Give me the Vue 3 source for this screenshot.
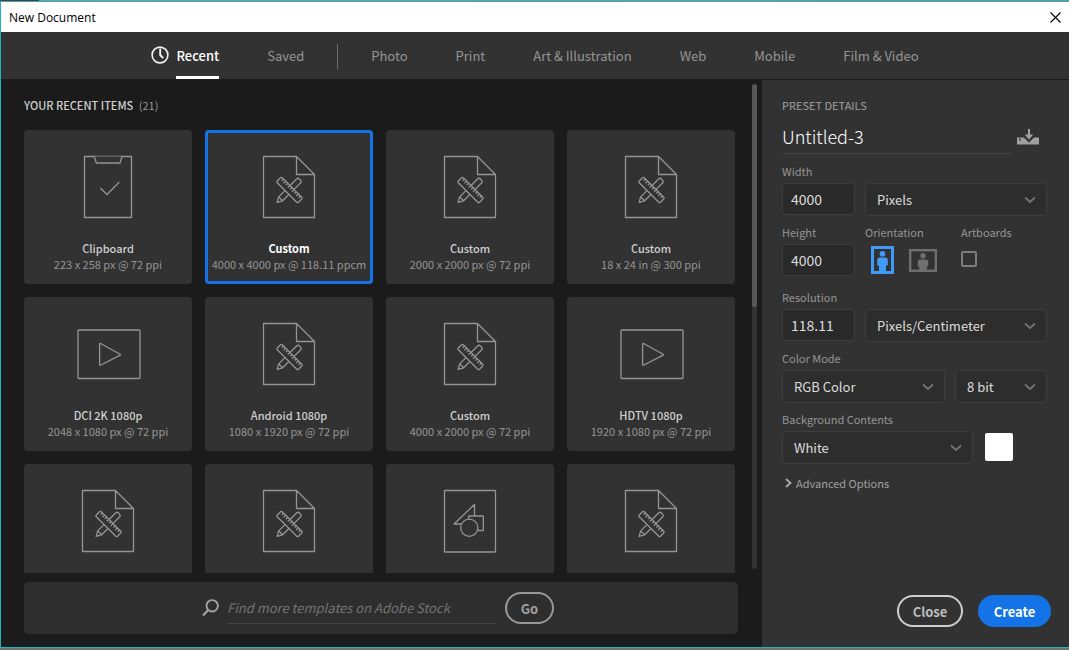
<script setup>
import { ref } from 'vue'

const tabs = ['Photo', 'Print', 'Art & Illustration', 'Web', 'Mobile', 'Film & Video']

const presets = [
  { icon: 'clipboard', name: 'Clipboard', meta: '223 x 258 px @ 72 ppi' },
  { icon: 'custom', name: 'Custom', meta: '4000 x 4000 px @ 118.11 ppcm' },
  { icon: 'custom', name: 'Custom', meta: '2000 x 2000 px @ 72 ppi' },
  { icon: 'custom', name: 'Custom', meta: '18 x 24 in @ 300 ppi' },
  { icon: 'video', name: 'DCI 2K 1080p', meta: '2048 x 1080 px @ 72 ppi' },
  { icon: 'custom', name: 'Android 1080p', meta: '1080 x 1920 px @ 72 ppi' },
  { icon: 'custom', name: 'Custom', meta: '4000 x 2000 px @ 72 ppi' },
  { icon: 'video', name: 'HDTV 1080p', meta: '1920 x 1080 px @ 72 ppi' },
  { icon: 'custom' },
  { icon: 'custom' },
  { icon: 'shapes' },
  { icon: 'custom' },
]

const selected = ref(1)
const orientation = ref('portrait')
const docName = ref('Untitled-3')
const width = ref('4000')
const height = ref('4000')
const resolution = ref('118.11')
</script>

<template>
  <div class="desktop">
    <div class="window">
      <header class="titlebar">
        <span>New Document</span>
        <button class="x" type="button" aria-label="Close window">
          <svg width="11" height="11" viewBox="0 0 11 11"><path d="M.5 .5l10 10M10.500 .5l-10 10" stroke="#000" stroke-width="1.1" /></svg>
        </button>
      </header>

      <nav class="tabs">
        <button class="tab active" type="button">
          <svg class="clock" width="18" height="18" viewBox="0 0 18 18" fill="none">
            <circle cx="9" cy="9" r="7.9" stroke="#f2f2f2" stroke-width="1.6" />
            <path d="M9.200 2.600V9l3 3.200" stroke="#f2f2f2" stroke-width="1.9" />
          </svg>
          <span>Recent</span>
        </button>
        <button class="tab" type="button">Saved</button>
        <i class="divider"></i>
        <button v-for="t in tabs" :key="t" class="tab" type="button">{{ t }}</button>
      </nav>

      <div class="body">
        <main class="browser">
          <h2 class="heading strong">YOUR RECENT ITEMS <span>(21)</span></h2>
          <div class="scroller">
            <div class="cards">
              <button
                v-for="(p, i) in presets"
                :key="i"
                type="button"
                class="card"
                :class="{ selected: i === selected }"
                @click="selected = i"
              >
                <svg class="art" width="64" height="64" viewBox="0 0 64 64">
                  <template v-if="p.icon === 'clipboard'">
                    <path d="M8.500 1.500h47v61h-47z" />
                    <path d="M18.300 1.500l2 6.500H44l2-6.500M24.300 33l6.700 6.500L43.300 27" />
                  </template>
                  <template v-else-if="p.icon === 'custom'">
                    <path d="M6.500 1.500h33l18 18v43h-51zM39.500 1.500v18h18" />
                    <g transform="translate(32.500 35)">
                      <g transform="rotate(-45)">
                        <path d="M-4-2.800H-12.500L-17.500 0L-12.500 2.800H-4M-12.500-2.800V2.800M4-2.800H12.800Q14.800-2.800 14.800-.8V.8Q14.800 2.800 12.800 2.800H4" />
                      </g>
                      <g transform="rotate(45)">
                        <rect x="-15" y="-3.500" width="30" height="7" rx="1.200" />
                        <path d="M-12-3.500v2.500M-9-3.500v3M-6-3.500v2.500M-3-3.500v3M0-3.500v2.500M3-3.500v3M6-3.500v2.500M9-3.500v3M12-3.500v2.500" />
                      </g>
                    </g>
                  </template>
                  <template v-else-if="p.icon === 'video'">
                    <rect x="2" y="8" width="62" height="48.500" rx="1" />
                    <path d="M23.600 22.500Q23.600 21 25 21.700L43.700 32Q45 32.700 43.700 33.400L25 43Q23.600 43.700 23.600 42.300z" />
                  </template>
                  <template v-else>
                    <rect x="6.500" y="1.500" width="51" height="61.500" rx=".5" />
                    <path d="M36.500 27V15.500L16 35h7.500M30.700 30V27h14.600v14.500H40" />
                    <circle cx="31.300" cy="38.700" r="8.600" />
                  </template>
                </svg>
                <span v-if="p.name" class="name">{{ p.name }}</span>
                <span v-if="p.meta" class="meta">{{ p.meta }}</span>
              </button>
            </div>
          </div>
          <form class="search" @submit.prevent>
            <svg width="17" height="18" viewBox="0 0 17 18" fill="none">
              <circle cx="10.200" cy="6.800" r="5.700" stroke="#a3a3a3" stroke-width="1.900" />
              <path d="M6.200 11L1 16.500" stroke="#a3a3a3" stroke-width="2.200" />
            </svg>
            <input type="text" aria-label="Search templates" placeholder="Find more templates on Adobe Stock" />
            <button type="submit" class="pill go">Go</button>
          </form>
          <div class="track"><div class="thumb"></div></div>
        </main>

        <aside class="details">
          <h2 class="heading dim">PRESET DETAILS</h2>
          <div class="title-row">
            <input v-model="docName" type="text" aria-label="Document name" />
            <button class="save" type="button" aria-label="Save preset">
              <svg width="22" height="16" viewBox="0 0 22 16">
                <path fill="#a0a0a0" d="M0 8.500h6.800l5.200 5 5.200-5H22V15.500H0z" />
                <circle cx="3" cy="10.600" r="1" fill="#323232" />
                <path fill="#a0a0a0" d="M11 0h2v5.500h3.200L12 10.800 7.800 5.500H11z" />
              </svg>
            </button>
          </div>

          <div class="row unit">
            <div class="field">
              <label for="w">Width</label>
              <input id="w" v-model="width" class="box" type="text" />
            </div>
            <div class="select">
              <select aria-label="Width unit"><option>Pixels</option></select>
              <svg class="chev" viewBox="0 0 12 8"><path d="M1 1.500l5 4.500 5-4.500" /></svg>
            </div>
          </div>

          <div class="row orient">
            <div class="field">
              <label for="h">Height</label>
              <input id="h" v-model="height" class="box" type="text" />
            </div>
            <fieldset class="field">
              <legend>Orientation</legend>
              <div class="choices">
                <label class="choice">
                  <input v-model="orientation" type="radio" name="orientation" value="portrait" aria-label="Portrait" />
                  <svg width="23" height="28" viewBox="0 0 23 28">
                    <rect x="1.500" y="1.500" width="20" height="25" fill="none" stroke="currentColor" stroke-width="3" />
                    <circle cx="11.500" cy="7.800" r="2.800" fill="currentColor" />
                    <path d="M8.500 11.500h6q2.300 0 2.300 2.500v5.500h-1.800V26H8v-6.500H6.200V14q0-2.500 2.300-2.500z" fill="currentColor" />
                  </svg>
                </label>
                <label class="choice">
                  <input v-model="orientation" type="radio" name="orientation" value="landscape" aria-label="Landscape" />
                  <svg width="28" height="23" viewBox="0 0 28 23">
                    <rect x="1.200" y="1.200" width="25.600" height="20.600" fill="none" stroke="currentColor" stroke-width="2.400" />
                    <circle cx="14" cy="6.800" r="2.700" fill="currentColor" />
                    <path d="M11 10.500h6q2.300 0 2.300 2.500v4.500h-1.500V21h-7.600v-3.500H8.700V13q0-2.500 2.300-2.500z" fill="currentColor" />
                  </svg>
                </label>
              </div>
            </fieldset>
            <div class="field">
              <label for="ab">Artboards</label>
              <input id="ab" class="tick" type="checkbox" />
            </div>
          </div>

          <div class="row unit">
            <div class="field">
              <label for="r">Resolution</label>
              <input id="r" v-model="resolution" class="box" type="text" />
            </div>
            <div class="select">
              <select aria-label="Resolution unit"><option>Pixels/Centimeter</option></select>
              <svg class="chev" viewBox="0 0 12 8"><path d="M1 1.500l5 4.500 5-4.500" /></svg>
            </div>
          </div>

          <div class="row mode">
            <div class="field">
              <label for="cm">Color Mode</label>
              <div class="select">
                <select id="cm"><option>RGB Color</option></select>
                <svg class="chev" viewBox="0 0 12 8"><path d="M1 1.500l5 4.500 5-4.500" /></svg>
              </div>
            </div>
            <div class="select">
              <select aria-label="Bit depth"><option>8 bit</option></select>
              <svg class="chev" viewBox="0 0 12 8"><path d="M1 1.500l5 4.500 5-4.500" /></svg>
            </div>
          </div>

          <div class="row backdrop">
            <div class="field">
              <label for="bg">Background Contents</label>
              <div class="select">
                <select id="bg"><option>White</option></select>
                <svg class="chev" viewBox="0 0 12 8"><path d="M1 1.500l5 4.500 5-4.500" /></svg>
              </div>
            </div>
            <button class="swatch" type="button" aria-label="Background color"></button>
          </div>

          <button class="advanced" type="button">
            <svg width="7" height="10" viewBox="0 0 7 10" fill="none"><path d="M1 1l4.500 4L1 9" stroke="#a8a8a8" stroke-width="1.900" /></svg>
            Advanced Options
          </button>

          <footer class="actions">
            <button class="pill close" type="button">Close</button>
            <button class="pill create" type="button">Create</button>
          </footer>
        </aside>
      </div>
    </div>
  </div>
</template>

<style>
body {
  background: #6c7074;
}
</style>

<style scoped>
* {
  box-sizing: border-box;
}
.desktop {
  height: 100vh;
  padding: 1px 0 2px;
  background: linear-gradient(90deg, #7a2d2d 0, #5b3236 38px, #8d9499 40px, #858c92 100%) top / 100% 1px no-repeat #6c7074;
  font-family: 'Noto Sans CJK SC', 'Noto Sans', sans-serif;
  font-size: 13px;
  color: #a0a0a0;
}
button,
input,
select {
  font: inherit;
  color: inherit;
  margin: 0;
  padding: 0;
  border: 0;
  background: none;
  appearance: none;
  outline: none;
  min-width: 0;
}
button {
  cursor: pointer;
}
svg {
  display: block;
}
.window {
  height: 100%;
  display: flex;
  flex-direction: column;
  border: 1px solid #1fb3c4;
  border-right: 0;
  background: #1b1b1b;
}
.titlebar {
  height: 30px;
  flex: none;
  padding: 0 8px;
  display: flex;
  align-items: center;
  justify-content: space-between;
  background: #fff;
  color: #000;
  font-family: 'Open Sans', 'Noto Sans', sans-serif;
  font-size: 12px;
}
.tabs {
  height: 47px;
  flex: none;
  display: flex;
  justify-content: center;
  gap: 48px;
  background: #323232;
}
.tab {
  white-space: nowrap;
  display: flex;
  gap: 7px;
  line-height: 47px;
  color: #959595;
}
.tab.active {
  color: #fff;
  font-weight: 500;
}
.tab.active span {
  height: 47px;
  border-bottom: 3px solid #fff;
}
.clock {
  margin-top: 14px;
}
.divider {
  width: 1px;
  height: 25px;
  margin: 12px -15px 0;
  background: #6a6a6a;
}
.body {
  flex: 1;
  min-height: 0;
  display: grid;
  grid-template-columns: minmax(0, 1fr) 307px;
}
.browser {
  position: relative;
  min-height: 0;
  display: flex;
  flex-direction: column;
  padding: 18px 24px 13px 23px;
}
.heading {
  margin: 0;
  font-size: 11px;
  font-weight: 400;
  line-height: 16px;
  color: #cfcfcf;
}
.heading.strong {
  font-weight: 500;
}
.heading span {
  margin-left: 3px;
  font-weight: 400;
  color: #959595;
}
.heading.dim {
  color: #a0a0a0;
}
.scroller {
  flex: 1;
  min-height: 0;
  overflow: hidden;
  margin: 17px 3px 9px 0;
}
.cards {
  display: grid;
  grid-template-columns: repeat(4, minmax(0, 1fr));
  grid-auto-rows: 154px;
  gap: 13px;
}
.card {
  display: flex;
  flex-direction: column;
  align-items: center;
  padding-top: 25px;
  border-radius: 4px;
  background: #323232;
  font-size: 11px;
  line-height: 16px;
  white-space: nowrap;
}
.card.selected {
  box-shadow: inset 0 0 0 3px #1473e6;
}
.art {
  overflow: visible;
  fill: #323232;
  stroke: #959595;
  stroke-width: 1.3;
  stroke-linejoin: round;
}
.name {
  margin-top: 21px;
  font-weight: 500;
  color: #cfcfcf;
}
.selected .name {
  color: #fff;
  font-weight: 700;
}
.meta {
  color: #959595;
}
.search {
  height: 52px;
  flex: none;
  display: flex;
  align-items: center;
  justify-content: center;
  padding-right: 6px;
  border-radius: 4px;
  background: #2e2e2e;
}
.search input {
  width: 270px;
  height: 31px;
  margin: 0 8px;
  border-bottom: 1px solid #444;
}
.search input::placeholder {
  font-style: italic;
  color: #747474;
  opacity: 1;
}
.pill {
  height: 32px;
  border-radius: 16px;
  font-weight: 700;
}
.go {
  width: 49px;
  border: 2px solid #999;
}
.track {
  position: absolute;
  top: 5px;
  right: 5px;
  bottom: 78px;
  width: 5px;
  border-radius: 3px;
  background: #323232;
}
.thumb {
  height: 46%;
  border-radius: 3px;
  background: #575757;
}
.details {
  display: flex;
  flex-direction: column;
  min-height: 0;
  margin-top: 1px;
  padding: 17px 22px 20px 20px;
  background: #323232;
}
.title-row {
  display: flex;
  align-items: center;
  gap: 4px;
  margin-top: 9px;
}
.title-row input {
  flex: 1;
  height: 32px;
  padding-bottom: 3px;
  font-size: 18px;
  font-weight: 300;
  color: #fff;
  border-bottom: 1px solid #424242;
}
.save {
  width: 30px;
  padding-bottom: 2px;
}
.row {
  display: grid;
  gap: 10px;
  align-items: end;
  margin-top: 8px;
}
.title-row + .row {
  margin-top: 9px;
}
.unit {
  grid-template-columns: 73px 1fr;
}
.orient {
  grid-template-columns: 73px 86px 1fr;
  align-items: start;
  margin-bottom: 4px;
}
.mode {
  grid-template-columns: 163px 1fr;
}
.backdrop {
  grid-template-columns: 191px 28px;
  column-gap: 12px;
}
.field {
  display: flex;
  flex-direction: column;
  min-width: 0;
  min-height: 53px;
  margin: 0;
  padding: 0;
  border: 0;
}
.field > label,
legend {
  padding: 0;
  margin-bottom: 4px;
  font-size: 11px;
  line-height: 16px;
  color: #959595;
}
.box {
  height: 32px;
  padding: 0 8px;
  border: 1px solid #3e3e3e;
  border-radius: 4px;
  background: #292929;
  color: #dcdcdc;
  font-size: 14px;
}
.select {
  position: relative;
  height: 33px;
}
select {
  width: 100%;
  height: 33px;
  padding: 0 32px 0 11px;
  border: 1px solid #3e3e3e;
  border-radius: 4px;
  background: #2d2d2d;
  color: #dcdcdc;
}
.chev {
  position: absolute;
  top: 13px;
  right: 11px;
  width: 12px;
  height: 8px;
  fill: none;
  stroke: #747474;
  stroke-width: 1.8;
  pointer-events: none;
}
.choices {
  display: flex;
  align-items: center;
  gap: 15px;
  padding: 2px 0 0 6px;
}
.choice {
  color: #6f6f6f;
}
.choice:has(input:checked) {
  color: #3f9bf7;
}
.choice input {
  position: absolute;
  opacity: 0;
}
.tick {
  width: 16px;
  height: 16px;
  margin-top: 7px;
  border: 2px solid #7d7d7d;
  border-radius: 2px;
}
.swatch {
  width: 28px;
  height: 28px;
  margin-bottom: 3px;
  border-radius: 2px;
  background: #fff;
}
.advanced {
  display: flex;
  align-items: center;
  align-self: flex-start;
  gap: 4px;
  margin: 9px 0 0 3px;
  font-size: 11px;
  line-height: 20px;
}
.actions {
  display: flex;
  justify-content: flex-end;
  gap: 15px;
  margin: auto -4px 0 0;
}
.close {
  width: 66px;
  border: 2px solid #cfcfcf;
  color: #bdbdbd;
}
.create {
  width: 73px;
  background: #1473e6;
  color: #fff;
}
</style>
